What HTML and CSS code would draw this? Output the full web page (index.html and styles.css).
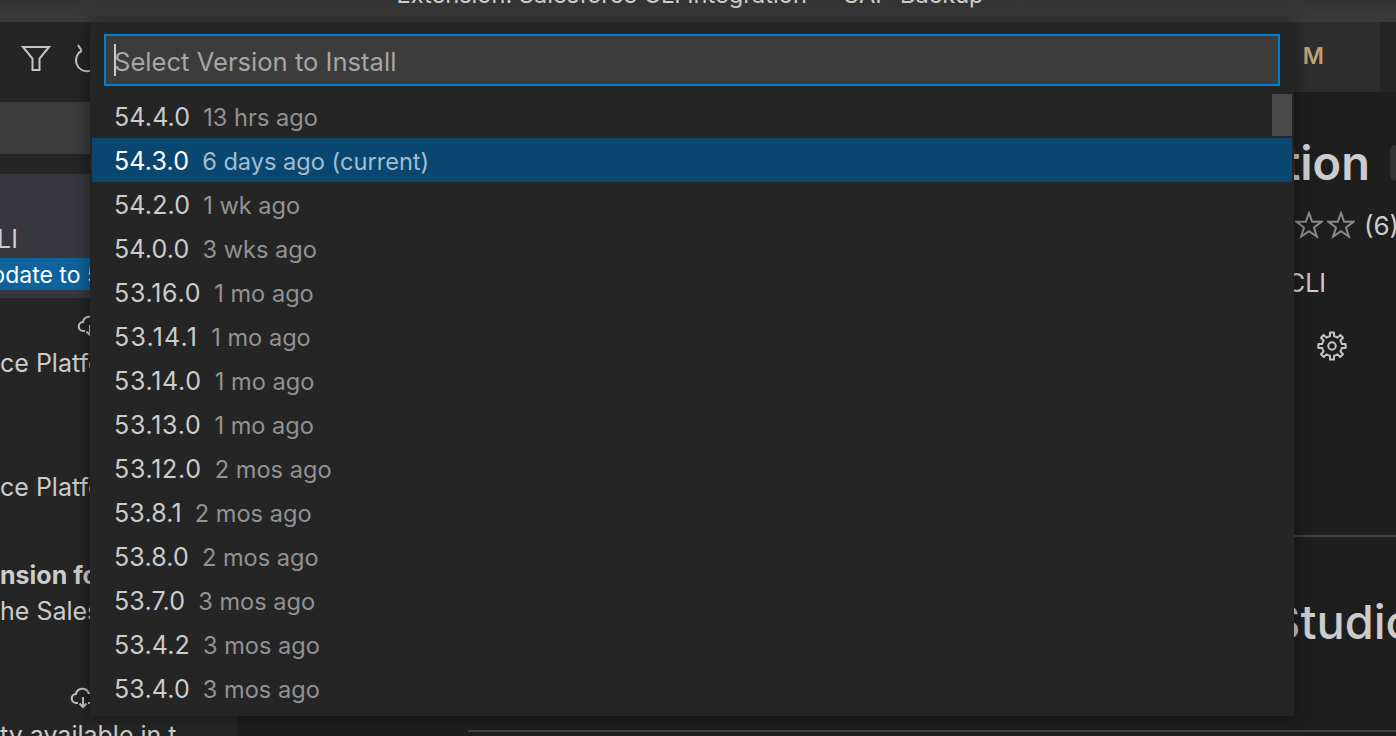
FILE: index.html
```html
<!DOCTYPE html>
<html lang="en">
<head>
<meta charset="utf-8">
<title>Select Version to Install</title>
<link rel="stylesheet" href="styles.css">
</head>
<body>
<div class="window">
  <header class="titlebar"><span class="title">Extension: Salesforce CLI Integration — SAP-Backup</span></header>
  <div class="main">
    <aside class="sidebar">
      <div class="toolbar">
        <svg class="ico-filter" viewBox="0 0 30 28" width="30" height="28"><path d="M2 3h26L18.500 14.500V26h-7V14.500z"/></svg>
        <svg class="ico-refresh" viewBox="0 0 28 30" width="28" height="30"><path d="M4 2l3.500 5.500M8 7.500A11 11 0 1 0 24 17"/></svg>
      </div>
      <div class="search"></div>
      <div class="row row-active">
        <div class="line"></div>
        <div class="line line-clip">LI</div>
        <div class="badge"><span>Update to 54.4.0</span></div>
      </div>
      <div class="row">
        <div class="line line-icon">
          <svg class="ico-cloud" viewBox="0 0 26 24" width="26" height="24"><path d="M8 17H6.500a4.500 4.500 0 0 1-.5-9A6.500 6.500 0 0 1 18.500 7a5 5 0 0 1 1 10H18M13 11v10M9.500 17.500L13 21l3.500-3.500"/></svg>
        </div>
        <div class="line">ce Platform</div>
      </div>
      <div class="row">
        <div class="line"></div>
        <div class="line">ce Platform</div>
      </div>
      <div class="row">
        <div class="line line-bold">nsion for</div>
        <div class="line">he Salesforce</div>
      </div>
      <div class="row row-last">
        <div class="line line-icon icon-left">
          <svg class="ico-cloud" viewBox="0 0 26 24" width="26" height="24"><path d="M8 17H6.500a4.500 4.500 0 0 1-.5-9A6.500 6.500 0 0 1 18.500 7a5 5 0 0 1 1 10H18M13 11v10M9.500 17.500L13 21l3.500-3.500"/></svg>
        </div>
        <div class="line">ty available in t</div>
      </div>
    </aside>
    <section class="editor">
      <div class="tabs"><div class="tab"><span class="tab-m">M</span></div></div>
      <div class="detail">
        <div class="d-title"><span>Integration</span><i class="chip"></i></div>
        <div class="d-rating">
          <svg class="star" viewBox="0 0 28 28" width="28" height="28"><path d="M14 2l3.200 8.800h9.300l-7.500 5.700 2.800 9L14 20.100 6.200 25.500l2.800-9-7.500-5.700h9.300z"/></svg>
          <svg class="star" viewBox="0 0 28 28" width="28" height="28"><path d="M14 2l3.200 8.800h9.300l-7.500 5.700 2.800 9L14 20.100 6.200 25.500l2.800-9-7.500-5.700h9.300z"/></svg>
          <span class="count">(6)</span>
        </div>
        <div class="d-pub">Salesforce CLI</div>
        <div class="d-gear">
          <svg class="gear" viewBox="0 0 24 24" width="30" height="30">
            <g><path d="M8.940 4.610L10.340 4.170L10.470 1.110H13.530L13.660 4.170L15.060 4.610"/>
            <path transform="rotate(45 12 12)" d="M8.940 4.610L10.340 4.170L10.470 1.110H13.530L13.660 4.170L15.060 4.610"/>
            <path transform="rotate(90 12 12)" d="M8.940 4.610L10.340 4.170L10.470 1.110H13.530L13.660 4.170L15.060 4.610"/>
            <path transform="rotate(135 12 12)" d="M8.940 4.610L10.340 4.170L10.470 1.110H13.530L13.660 4.170L15.060 4.610"/>
            <path transform="rotate(180 12 12)" d="M8.940 4.610L10.340 4.170L10.470 1.110H13.530L13.660 4.170L15.060 4.610"/>
            <path transform="rotate(225 12 12)" d="M8.940 4.610L10.340 4.170L10.470 1.110H13.530L13.660 4.170L15.060 4.610"/>
            <path transform="rotate(270 12 12)" d="M8.940 4.610L10.340 4.170L10.470 1.110H13.530L13.660 4.170L15.060 4.610"/>
            <path transform="rotate(315 12 12)" d="M8.940 4.610L10.340 4.170L10.470 1.110H13.530L13.660 4.170L15.060 4.610"/>
            <circle cx="12" cy="12" r="3"/></g>
          </svg>
        </div>
        <hr class="rule rule-a">
        <div class="d-studio">Visual Studio</div>
        <hr class="rule rule-b">
      </div>
    </section>
  </div>
  <div class="quickpick">
    <div class="qp-input"><i class="caret"></i><span class="qp-placeholder">Select Version to Install</span></div>
    <ul class="qp-list">
      <li class="qp-item"><b>54.4.0</b><span>13 hrs ago</span></li>
      <li class="qp-item is-selected"><b>54.3.0</b><span>6 days ago (current)</span></li>
      <li class="qp-item"><b>54.2.0</b><span>1 wk ago</span></li>
      <li class="qp-item"><b>54.0.0</b><span>3 wks ago</span></li>
      <li class="qp-item"><b class="wide">53.16.0</b><span>1 mo ago</span></li>
      <li class="qp-item"><b class="wider">53.14.1</b><span>1 mo ago</span></li>
      <li class="qp-item"><b class="wide">53.14.0</b><span>1 mo ago</span></li>
      <li class="qp-item"><b class="wide">53.13.0</b><span>1 mo ago</span></li>
      <li class="qp-item"><b class="wide">53.12.0</b><span>2 mos ago</span></li>
      <li class="qp-item"><b>53.8.1</b><span>2 mos ago</span></li>
      <li class="qp-item"><b>53.8.0</b><span>2 mos ago</span></li>
      <li class="qp-item"><b>53.7.0</b><span>3 mos ago</span></li>
      <li class="qp-item"><b>53.4.2</b><span>3 mos ago</span></li>
      <li class="qp-item"><b>53.4.0</b><span>3 mos ago</span></li>
      <li class="qp-thumb"></li>
    </ul>
  </div>
</div>
</body>
</html>
```

FILE: styles.css
```css
* { box-sizing: border-box; }
html, body { margin: 0; height: 100%; }
body { background: #1e1e1e; color: #ccc; font-family: Inter, "Noto Sans", "Liberation Sans", sans-serif; font-size: 25px; overflow: hidden; }
.window { position: relative; width: 1396px; height: 736px; overflow: hidden; display: flex; flex-direction: column; }

.titlebar { height: 22px; flex: none; display: flex; justify-content: center; align-items: flex-end; overflow: hidden; background: linear-gradient(#333, #3c3c3c); padding-right: 16px; }
.title { font-size: 23.600px; line-height: 30px; white-space: nowrap; color: #ccc; margin-bottom: 12px; }

.main { flex: 1; display: flex; min-height: 0; }

.sidebar { width: 238px; flex: none; background: #252526; overflow: hidden; }
.toolbar { height: 80px; display: flex; align-items: center; gap: 23px; padding-left: 21px; padding-bottom: 8px; }
.toolbar svg { fill: none; stroke: #c5c5c5; stroke-width: 2; }
.search { height: 52px; background: #3c3c3c; margin-bottom: 20px; }
.row { height: 124px; padding-top: 10px; }
.row-active { background: #37373d; }
.line { height: 36px; line-height: 38px; white-space: nowrap; }
.line-clip { margin-left: -3px; }
.line-bold { font-weight: 700; }
.line-icon { display: flex; padding-left: 77px; align-items: center; }
.icon-left { padding-left: 70px; }
.row-last { height: auto; }
.ico-cloud { fill: none; stroke: #c5c5c5; stroke-width: 2; }
.badge { margin-top: 2px; height: 32px; background: #0e639c; color: #fff; font-size: 23px; line-height: 34px; white-space: nowrap; overflow: hidden; }
.badge span { margin-left: -26px; display: inline-block; }

.editor { flex: 1; min-width: 0; display: flex; flex-direction: column; overflow: hidden; }
.tabs { height: 70px; flex: none; background: #252526; display: flex; justify-content: flex-end; }
.tab { width: 200px; margin-right: 16px; background: #2d2d2d; display: flex; align-items: center; justify-content: flex-end; padding-right: 56px; padding-bottom: 2px; }
.tab-m { color: #c09f73; font-size: 23px; font-weight: 600; }

.detail { padding: 41px 26px 0 230px; }
.d-title { display: flex; justify-content: flex-end; height: 60px; line-height: 60px; font-size: 47px; font-weight: 600; white-space: nowrap; margin-right: -20px; }
.chip { flex: none; width: 40px; height: 36px; margin: 12px -40px 0 20px; border-radius: 6px; background: #333; }
.d-rating { display: flex; justify-content: flex-end; align-items: center; gap: 4px; height: 60px; margin-top: 2px; white-space: nowrap; margin-right: -29px; }
.count { margin-left: 5px; font-size: 26px; }
.star { fill: none; stroke: #8a8a8a; stroke-width: 2; }
.d-pub { height: 56px; line-height: 56px; text-align: right; white-space: nowrap; margin-right: 44px; }
.d-gear { height: 52px; margin-top: 9px; display: flex; justify-content: flex-end; align-items: center; margin-right: 23px; }
.gear { fill: none; stroke: #c5c5c5; stroke-width: 1.600; stroke-linejoin: round; }
.rule { border: 0; height: 2px; background: #444; margin: 0 -26px 0 0; }
.rule-a { margin-top: 163px; }
.d-studio { margin-top: 53px; height: 64px; line-height: 64px; text-align: right; font-size: 47px; font-weight: 500; white-space: nowrap; margin-right: -44px; }
.rule-b { margin-top: 76px; }

.quickpick { position: absolute; left: 90px; top: 22px; width: 1204px; height: 694px; background: #252526; box-shadow: 0 0 16px rgba(0, 0, 0, .45); padding: 12px 2px 0; }
.qp-input { margin: 0 12px; height: 52px; border: 2px solid #007fd4; background: #3c3c3c; display: flex; align-items: center; padding: 2px 0 0 8px; position: relative; }
.caret { position: absolute; left: 8px; top: 8px; width: 2px; height: 32px; background: #ccc; }
.qp-placeholder { color: #a6a6a6; white-space: nowrap; font-size: 25.600px; }
.qp-list { list-style: none; margin: 8px 0 0; padding: 0; position: relative; }
.qp-item { height: 44px; display: flex; align-items: center; gap: 13px; padding: 2px 0 0 22px; white-space: nowrap; }
.qp-item b { font-weight: 400; color: #ccc; letter-spacing: .15px; }
.qp-item b.wide { letter-spacing: .7px; }
.qp-item b.wider { letter-spacing: 1.200px; }
.qp-item span { color: #929292; font-size: 23.600px; }
.qp-item.is-selected { background: #094771; }
.qp-item.is-selected b { color: #fff; }
.qp-item.is-selected span { color: #a3bccf; }
.qp-thumb { position: absolute; right: 0; top: 0; width: 20px; height: 42px; background: #4a4a4a; }
```
